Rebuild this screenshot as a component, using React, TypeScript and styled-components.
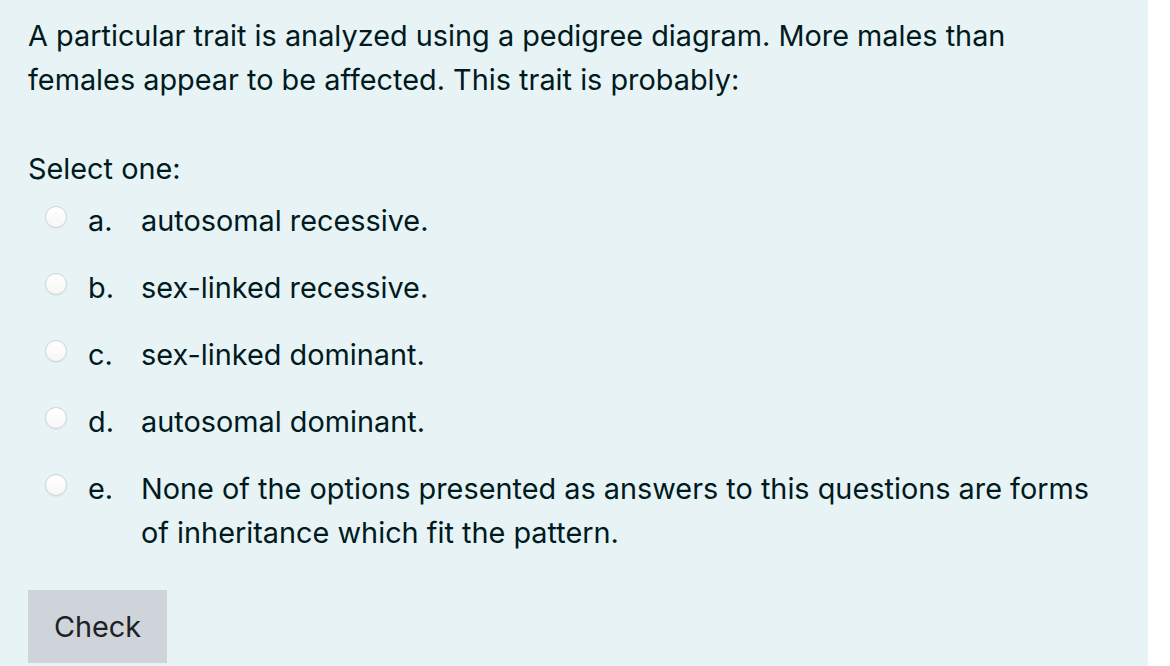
import React from "react";
import styled, { createGlobalStyle } from "styled-components";

const Global = createGlobalStyle`
  html, body { margin: 0; padding: 0; background: #ffffff; }
  body { font-family: "Inter", "Liberation Sans", sans-serif; color: #001a1e; }
`;

const Panel = styled.div`
  width: 1148px;
  min-height: 666px;
  box-sizing: border-box;
  background: #e7f3f5;
  padding: 14px 0 0 28px;
  font-size: 28.85px;
  line-height: 44px;
`;

const QText = styled.p`
  margin: 0 0 45px 0;
  width: 1000px;
`;

const Prompt = styled.div`
  margin: 0 0 8px 0;
`;

const Answers = styled.div`
  display: flex;
  flex-direction: column;
  gap: 23px;
`;

const Row = styled.label`
  display: flex;
  align-items: flex-start;
`;

const Radio = styled.input.attrs({ type: "radio", name: "q" })`
  appearance: none;
  -webkit-appearance: none;
  margin: 7px 21px 0 17px;
  width: 22px;
  height: 22px;
  flex: none;
  border-radius: 50%;
  border: 1px solid #cfd3d6;
  background: linear-gradient(#ffffff, #f7f7f7);
  box-sizing: border-box;
  box-shadow: 0 1px 1px rgba(0, 0, 0, 0.05);
`;

const Letter = styled.span`
  width: 53px;
  flex: none;
`;

const AnswerText = styled.span`
  width: 960px;
`;

const CheckButton = styled.button`
  margin-top: 35px;
  width: 139px;
  height: 73px;
  border: none;
  background: #ced4da;
  color: #1d2125;
  font-family: "Inter", "Liberation Sans", sans-serif;
  font-size: 28.85px;
  padding: 0;
`;

const answers = [
  ["a.", "autosomal recessive."],
  ["b.", "sex-linked recessive."],
  ["c.", "sex-linked dominant."],
  ["d.", "autosomal dominant."],
  ["e.", "None of the options presented as answers to this questions are forms of inheritance which fit the pattern."],
];

export default function App() {
  return (
    <>
      <Global />
      <Panel>
        <QText>
          A particular trait is analyzed using a pedigree diagram. More males than females appear to be affected. This trait is probably:
        </QText>
        <Prompt>Select one:</Prompt>
        <Answers>
          {answers.map(([l, t]) => (
            <Row key={l}>
              <Radio />
              <Letter>{l}</Letter>
              <AnswerText>{t}</AnswerText>
            </Row>
          ))}
        </Answers>
        <CheckButton>Check</CheckButton>
      </Panel>
    </>
  );
}
